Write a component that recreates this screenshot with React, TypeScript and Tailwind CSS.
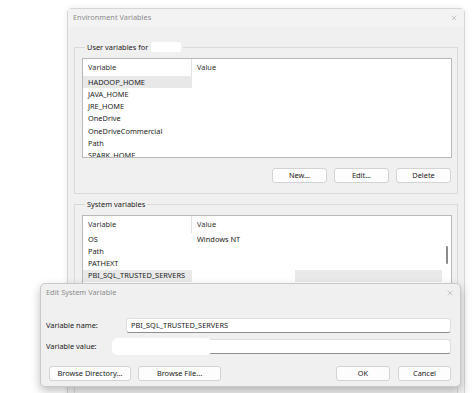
import { X } from "lucide-react";

const userVars = [
  "HADOOP_HOME",
  "JAVA_HOME",
  "JRE_HOME",
  "OneDrive",
  "OneDriveCommercial",
  "Path",
  "SPARK_HOME",
];

const systemVars = [
  { name: "OS", value: "Windows NT" },
  { name: "Path", value: "" },
  { name: "PATHEXT", value: "" },
  { name: "PBI_SQL_TRUSTED_SERVERS", value: "" },
];

const Btn = ({ label, w }: { label: string; w: string }) => (
  <button
    className={`${w} h-[15px] rounded-[3px] border border-[#d3d3d3] bg-[#fdfdfd] text-center leading-[13px] text-[#1b1b1b]`}
  >
    {label}
  </button>
);

const ListHeader = () => (
  <div className="flex h-[17px] items-center text-[#333]">
    <div className="flex h-full w-[109px] items-center border-r border-[#e2e2e2] pl-[5px]">Variable</div>
    <div className="pl-[5px]">Value</div>
  </div>
);

const App = () => {
  return (
    <div
      className="relative h-[393px] w-[474px] overflow-hidden bg-white text-[7.4px] text-[#1b1b1b]"
      style={{ fontFamily: '"Noto Sans", "Open Sans", sans-serif' }}
    >
      {/* Environment Variables window */}
      <div className="ml-[67px] mt-[8px] h-[400px] w-[398px] rounded-t-[5px] border border-[#d6d6d6] bg-[#f0f0f0] shadow-[0_0_6px_rgba(0,0,0,0.08)]">
        <div className="flex h-[18px] items-center justify-between bg-[#f3f3f3] pl-[5px] pr-[6px] text-[#8c8c8c]">
          <span>Environment Variables</span>
          <X size={8} strokeWidth={1.5} className="text-[#9a9a9a]" />
        </div>

        <div className="px-[6px] pt-[14px]">
          {/* User variables */}
          <fieldset className="h-[153px] border border-[#dadada] pl-[7px] pr-[5px]">
            <legend className="ml-[3px] flex items-center px-[2px] leading-[12px]">
              <span>User variables for</span>
              <span className="ml-[3px] inline-block h-[10px] w-[30px] rounded-[2px] bg-white" />
            </legend>
            <div className="mt-[5px] h-[100px] overflow-hidden border border-[#b9b9b9] bg-white">
              <ListHeader />
              {userVars.map((v, i) => (
                <div key={v} className={`flex h-[12.3px] items-center ${i === 0 ? "bg-[#e8e8e8]" : ""}`}>
                  <div className="w-[109px] pl-[5px]">{v}</div>
                  <div className="h-full flex-1 bg-white" />
                </div>
              ))}
            </div>
            <div className="mt-[10px] flex justify-end gap-[7px] pr-[1px]">
              <Btn label="New..." w="w-[55px]" />
              <Btn label="Edit..." w="w-[55px]" />
              <Btn label="Delete" w="w-[55px]" />
            </div>
          </fieldset>

          {/* System variables */}
          <fieldset className="mt-[4px] h-[200px] border border-[#dadada] pl-[7px] pr-[5px]">
            <legend className="ml-[3px] px-[2px] leading-[12px]">System variables</legend>
            <div className="mt-[5px] flex h-[100px] overflow-hidden border border-[#b9b9b9] bg-white">
              <div className="flex-1">
                <ListHeader />
                {systemVars.map((v, i) => (
                  <div
                    key={v.name}
                    className={`flex h-[12.3px] items-center ${i === 3 ? "bg-[#e9e9e9]" : ""}`}
                  >
                    <div className="w-[109px] whitespace-nowrap pl-[5px]">{v.name}</div>
                    <div className={`h-full pl-[5px] leading-[12.3px] ${i === 3 ? "w-[103px] bg-white" : ""}`}>
                      {v.value}
                    </div>
                  </div>
                ))}
              </div>
              <div className="flex w-[9px] justify-center">
                <div className="mt-[30px] h-[18px] w-[2px] rounded-full bg-[#8a8a8a]" />
              </div>
            </div>
          </fieldset>
        </div>
      </div>

      {/* Edit System Variable dialog */}
      <div className="absolute left-[40px] top-[283px] h-[104px] w-[421px] rounded-[5px] border border-[#c9c9c9] bg-[#f0f0f0] shadow-[0_4px_10px_rgba(0,0,0,0.25)]">
        <div className="flex h-[18px] items-center justify-between pl-[5px] pr-[6px] text-[#8c8c8c]">
          <span>Edit System Variable</span>
          <X size={8} strokeWidth={1.5} className="text-[#9a9a9a]" />
        </div>
        <div className="mt-[16px] flex flex-col gap-[6px] pl-[5px] pr-[9px]">
          <div className="flex items-center">
            <span className="w-[80px]">Variable name:</span>
            <div className="flex h-[15px] flex-1 items-center rounded-[3px] border border-[#dedede] border-b-[#8e8e8e] bg-white pl-[4px]">
              PBI_SQL_TRUSTED_SERVERS
            </div>
          </div>
          <div className="relative flex items-center">
            <span className="w-[80px]">Variable value:</span>
            <div className="h-[15px] flex-1 rounded-[3px] border border-[#dedede] border-b-[#8e8e8e] bg-white" />
            <div className="absolute left-[66px] top-[-1px] h-[17px] w-[100px] rounded-[6px] bg-white" />
          </div>
        </div>
        <div className="mt-[12px] flex items-center pl-[8px] pr-[9px]">
          <div className="flex gap-[7px]">
            <Btn label="Browse Directory..." w="w-[82px]" />
            <Btn label="Browse File..." w="w-[83px]" />
          </div>
          <div className="ml-auto flex gap-[8px]">
            <Btn label="OK" w="w-[54px]" />
            <Btn label="Cancel" w="w-[53px]" />
          </div>
        </div>
      </div>
    </div>
  );
};

export default App;
